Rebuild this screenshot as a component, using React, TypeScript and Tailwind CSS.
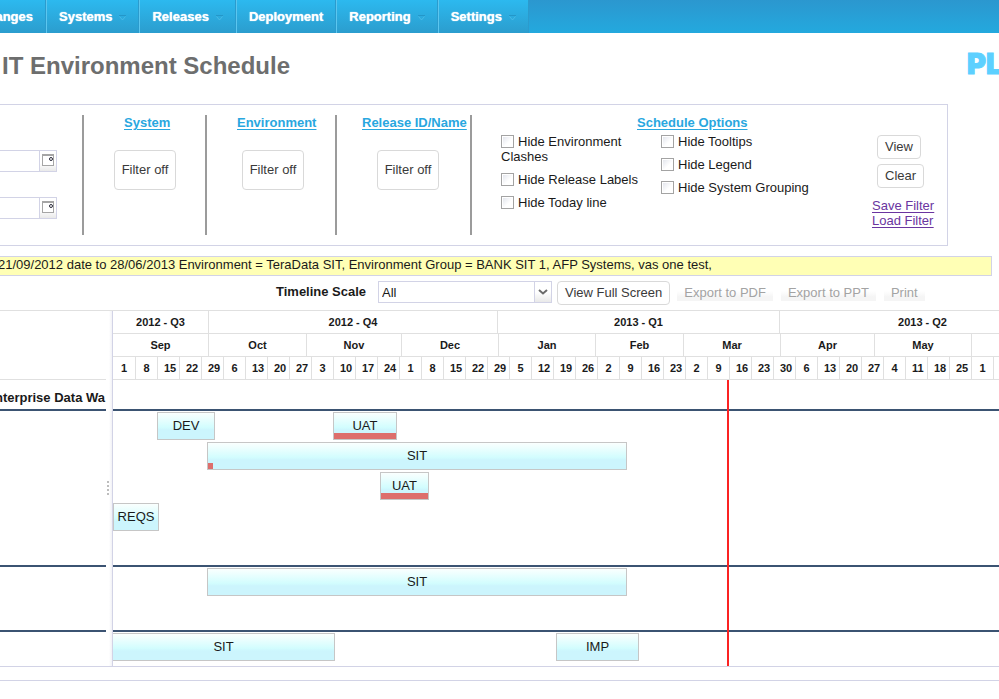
import React from "react";

const QUARTERS = [
  { label: "2012 - Q3", width: 96 },
  { label: "2012 - Q4", width: 289 },
  { label: "2013 - Q1", width: 282 },
  { label: "2013 - Q2", width: 286 },
];

const MONTHS = [
  { label: "Sep", width: 96 },
  { label: "Oct", width: 98 },
  { label: "Nov", width: 95 },
  { label: "Dec", width: 97 },
  { label: "Jan", width: 97 },
  { label: "Feb", width: 88 },
  { label: "Mar", width: 97 },
  { label: "Apr", width: 94 },
  { label: "May", width: 97 },
  { label: "", width: 94 },
];

const WEEKS = [
  1, 8, 15, 22, 29, 6, 13, 20, 27, 3, 10, 17, 24, 1, 8, 15, 22, 29, 5, 12, 19,
  26, 2, 9, 16, 23, 2, 9, 16, 23, 30, 6, 13, 20, 27, 4, 11, 18, 25, 1,
];

type BarData = { label: string; start: number; length: number; clash?: "full" | "start" };

const LANES: BarData[][] = [
  [
    { label: "DEV", start: 44, length: 58 },
    { label: "UAT", start: 220, length: 64, clash: "full" },
  ],
  [{ label: "SIT", start: 94, length: 420, clash: "start" }],
  [{ label: "UAT", start: 267, length: 49, clash: "full" }],
  [{ label: "REQS", start: 0, length: 46 }],
];

const TODAY = 614;

function Bar({ label, start, length, clash }: BarData) {
  return (
    <div
      className="absolute top-px h-7 overflow-hidden border border-[#c6c6c6] bg-linear-to-b from-[#fafffe] from-0% via-[#d2fdfe] via-55% to-[#ccf5fd] to-65% text-center text-[13px] leading-[25px]"
      style={{ left: start, width: length }}
    >
      {label}
      {clash === "full" && <span className="absolute inset-x-0 bottom-0 h-1.5 bg-[#dd6e6c]" />}
      {clash === "start" && <span className="absolute bottom-0 left-0 h-1.5 w-[5px] bg-[#dd6e6c]" />}
    </div>
  );
}

function Lane({ bars }: { bars: BarData[] }) {
  return (
    <div className="relative h-[30px] nth-3:h-[31px]">
      {bars.map((b) => (
        <Bar key={b.label} {...b} />
      ))}
    </div>
  );
}

function NavItem({ label, menu = false, first = false }: { label: string; menu?: boolean; first?: boolean }) {
  return (
    <a
      href="#"
      className={
        "flex h-full shrink-0 items-center gap-[7px] border-r border-r-[#2b9bcd] bg-linear-to-b from-[#2cb9ef] to-[#2b9dce] px-3 text-[13px] font-bold text-white [text-shadow:0_0_1px_#fff] " +
        (first ? "w-[46px] justify-end overflow-hidden" : "border-l border-l-[#5cc6ef]")
      }
    >
      <span className="shrink-0">{label}</span>
      {menu && (
        <svg width="7" height="7" viewBox="0 0 7 7" className="mt-1" aria-hidden="true">
          <path d="M0 0.5H7" stroke="#2497c9" />
          <path d="M0.5 1.5L3.5 5L6.5 1.5" fill="none" stroke="#52bfe9" strokeWidth="0.8" />
        </svg>
      )}
    </a>
  );
}

function DateField({ label }: { label: string }) {
  return (
    <div className="flex h-[22px] w-[57px] border border-l-0 border-[#d2d3e6]">
      <input type="text" aria-label={label} className="w-[39px] min-w-0 outline-none" />
      <button
        type="button"
        aria-label={"Choose " + label}
        className="flex flex-1 justify-center border-l border-[#d2d3e6] bg-linear-to-b from-white from-60% to-[#e9e9e9] pt-[3px]"
      >
        <svg width="12" height="12" viewBox="0 0 12 12" aria-hidden="true">
          <rect x="0.5" y="1" width="11" height="10.5" fill="#fff" stroke="#a5a5a5" />
          <path d="M0 1H12" stroke="#a5a5a5" strokeWidth="2" />
          <circle cx="9" cy="5" r="1.5" fill="#fff" stroke="#2b2b3a" />
        </svg>
      </button>
    </div>
  );
}

function FilterColumn({ title, className, headClass, buttonClass }: { title: string; className: string; headClass: string; buttonClass: string }) {
  return (
    <div className={"h-[120px] shrink-0 border-r-2 border-[#9b9b9b] " + className}>
      <a href="#" className={"block font-bold text-[#29a7df] underline underline-offset-2 " + headClass}>
        {title}
      </a>
      <button
        type="button"
        className={"mt-5 block h-10 w-[62px] rounded border border-[#d9d9d9] pb-0.5 text-[#3a3a3a] " + buttonClass}
      >
        Filter off
      </button>
    </div>
  );
}

function Check({ label }: { label: string }) {
  return (
    <label className="block">
      <input
        type="checkbox"
        className="mr-1 inline-block size-[13px] appearance-none border border-[#a3a3a3] bg-linear-to-br from-[#dfe2ea] to-white to-60% align-[-2px] shadow-[inset_0_0_0_1px_#fff]"
      />
      {label}
    </label>
  );
}

function DisabledButton({ label }: { label: string }) {
  return (
    <button
      type="button"
      disabled
      className="h-5 bg-linear-to-b from-white from-50% to-[#f5f5f5] to-80% px-[7px] pt-0.5 text-[#a3a3a3]"
    >
      {label}
    </button>
  );
}

function TierRow({ cells }: { cells: { label: string; width: number }[] }) {
  return (
    <div className="flex h-[23px] border-b border-[#e0e0e0]">
      {cells.map((c, i) => (
        <div key={i} className="shrink-0 border-r border-[#e0e0e0] text-center" style={{ width: c.width }}>
          {c.label}
        </div>
      ))}
    </div>
  );
}

export default function App() {
  return (
    <div className="overflow-hidden bg-white font-['Liberation_Sans',Arial,sans-serif] text-[13px] leading-[15px] text-[#1a1a1a]">
      <nav className="flex h-[33px] bg-linear-to-b from-[#2b97cf] to-[#23a9de]">
        <NavItem label="Changes" first />
        <NavItem label="Systems" menu />
        <NavItem label="Releases" menu />
        <NavItem label="Deployment" />
        <NavItem label="Reporting" menu />
        <NavItem label="Settings" menu />
      </nav>

      <header className="flex h-[71px] items-start justify-between pt-[17px]">
        <h1 className="pl-0.5 text-2xl font-bold text-[#6d6e6e]">IT Environment Schedule</h1>
        <div className="w-8 shrink-0 overflow-hidden font-['Inter',sans-serif] text-[29px] leading-7 font-black whitespace-nowrap text-[#5dd0ff] [-webkit-text-stroke:1px_#5dd0ff]">
          PL
        </div>
      </header>

      <form className="mr-[51px] flex h-[142px] border border-l-0 border-[#d2d3e6] pt-2.5">
        <div className="h-[120px] w-[84px] shrink-0 border-r-2 border-[#9b9b9b] pt-[35px]">
          <div className="flex flex-col gap-[25px]">
            <DateField label="start date" />
            <DateField label="end date" />
          </div>
        </div>
        <FilterColumn title="System" className="w-[123px]" headClass="ml-10" buttonClass="ml-[30px]" />
        <FilterColumn title="Environment" className="w-[130px]" headClass="ml-[30px]" buttonClass="ml-[35px]" />
        <FilterColumn title="Release ID/Name" className="w-[135px]" headClass="ml-[25px]" buttonClass="ml-10" />
        <div className="ml-[29px] w-[371px] shrink-0">
          <a href="#" className="ml-[136px] font-bold text-[#29a7df] underline underline-offset-2">
            Schedule Options
          </a>
          <div className="mt-1 flex">
            <div className="flex w-40 flex-col gap-2 pr-5">
              <Check label="Hide Environment Clashes" />
              <span className="whitespace-nowrap"><Check label="Hide Release Labels" /></span>
              <Check label="Hide Today line" />
            </div>
            <div className="flex flex-col gap-2">
              <Check label="Hide Tooltips" />
              <Check label="Hide Legend" />
              <Check label="Hide System Grouping" />
            </div>
          </div>
        </div>
        <div className="pt-5">
          <div className="flex flex-col items-start gap-[5px] pl-[5px]">
            <button type="button" className="h-6 rounded border border-[#d9d9d9] px-[7px] pb-0.5 text-[#3a3a3a]">View</button>
            <button type="button" className="h-6 rounded border border-[#d9d9d9] px-[7px] pb-0.5 text-[#3a3a3a]">Clear</button>
          </div>
          <div className="mt-2.5 flex flex-col items-start text-[#6a35a0] underline underline-offset-2">
            <a href="#">Save Filter</a>
            <a href="#">Load Filter</a>
          </div>
        </div>
      </form>

      <p className="mt-2.5 mr-[7px] h-5 border border-l-0 border-[#d2d3e6] bg-[#ffffb5] leading-4 whitespace-nowrap">
        <span className="-ml-0.5">
          21/09/2012 date to 28/06/2013 Environment = TeraData SIT, Environment Group = BANK SIT 1, AFP Systems, vas one test,
        </span>
      </p>

      <div className="flex h-[34px] items-start pt-[5px] pl-[276px] whitespace-nowrap">
        <label htmlFor="scale" className="w-[102px] shrink-0 pt-[3px] font-bold">Timeline Scale</label>
        <div className="relative mr-[5px] w-[174px] shrink-0">
          <select id="scale" className="block h-[22px] w-full appearance-none border border-[#d2d3e6] bg-white pl-[3px] outline-none">
            <option>All</option>
          </select>
          <span className="pointer-events-none absolute top-px right-px flex h-5 w-[17px] items-center justify-center border-l border-[#d2d3e6] bg-linear-to-b from-white from-50% to-[#e9e9e9]">
            <svg width="10" height="6" viewBox="0 0 10 6" aria-hidden="true">
              <path d="M1 1L5 4.5L9 1" fill="none" stroke="#6b6b6b" strokeWidth="2" />
            </svg>
          </span>
        </div>
        <button type="button" className="mr-[7px] h-6 rounded border border-[#d9d9d9] px-[7px] pb-0.5 text-[#3a3a3a]">View Full Screen</button>
        <div className="flex gap-2">
          <DisabledButton label="Export to PDF" />
          <DisabledButton label="Export to PPT" />
          <DisabledButton label="Print" />
        </div>
      </div>

      <main className="flex border-y border-t-[#e0e0e0] border-b-[#d2d3e6]">
        <div className="w-[106px] shrink-0">
          <div className="h-[69px] border-b border-[#e0e0e0]" />
          <div className="flex h-[31px] justify-end overflow-hidden border-b-2 border-[#3b5372] pt-2.5 pr-px font-bold whitespace-nowrap">
            Enterprise Data Wa
          </div>
          <div className="h-[156px] border-b-2 border-[#3b5372]" />
          <div className="h-[65px] border-b-2 border-[#3b5372]" />
        </div>
        <div className="flex w-[7px] shrink-0 flex-col gap-0.5 border-r border-[#d2d3e6] bg-linear-to-r from-white from-50% to-[#f1f1f6] pt-[170px] pl-px">
          <i className="size-0.5 bg-[#bdbdbd]" />
          <i className="size-0.5 bg-[#bdbdbd]" />
          <i className="size-0.5 bg-[#bdbdbd]" />
          <i className="size-0.5 bg-[#bdbdbd]" />
        </div>
        <div className="min-w-0 flex-1 overflow-hidden">
          <div className="text-[11px] leading-[22px] font-bold">
            <TierRow cells={QUARTERS} />
            <TierRow cells={MONTHS} />
            <div className="flex h-[23px] border-b border-[#e0e0e0]">
              {WEEKS.map((w, i) => (
                <div key={i} className="w-[22px] shrink-0 border-r border-[#e0e0e0] px-1.5 text-center first:w-[23px]">
                  {w}
                </div>
              ))}
            </div>
          </div>
          <div className="relative">
            <div className="h-[31px] border-b-2 border-[#3b5372]" />
            <div className="h-[156px] border-b-2 border-[#3b5372]">
              {LANES.map((bars, i) => (
                <Lane key={i} bars={bars} />
              ))}
            </div>
            <div className="h-[65px] border-b-2 border-[#3b5372]">
              <Lane bars={[{ label: "SIT", start: 94, length: 420 }]} />
            </div>
            <div className="h-[34px]">
              <Lane
                bars={[
                  { label: "SIT", start: -1, length: 223 },
                  { label: "IMP", start: 443, length: 83 },
                ]}
              />
            </div>
            <div className="absolute inset-y-0 w-0.5 bg-[#fb2323]" style={{ left: TODAY }} />
          </div>
        </div>
      </main>
      <div className="h-3.5 border-b border-[#d2d3e6]" />
    </div>
  );
}
